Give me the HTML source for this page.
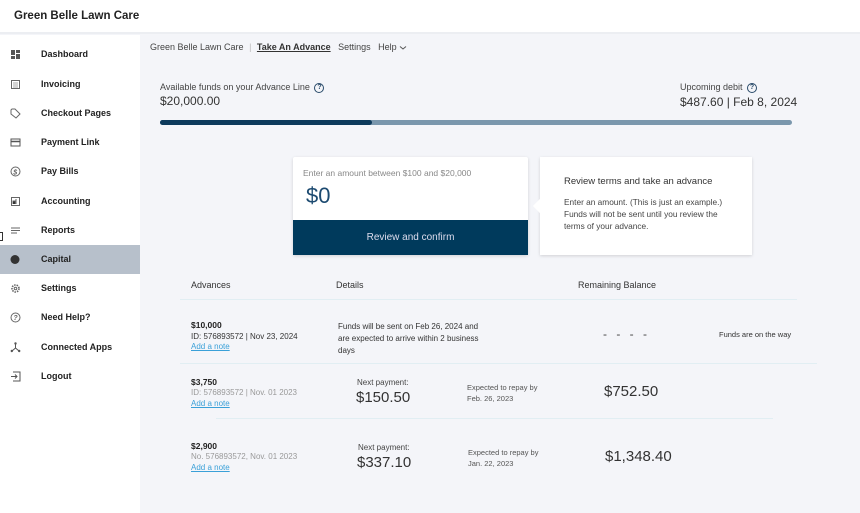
<!DOCTYPE html>
<html><head><style>
*{margin:0;padding:0;box-sizing:border-box}
body{width:860px;height:513px;overflow:hidden;background:#f4f5f9;font-family:"Liberation Sans",sans-serif;color:#222;position:relative}
.a{position:absolute;white-space:nowrap}
#hdr{left:0;top:0;width:860px;height:34px;background:#fff;border-bottom:2px solid #eceef2}
#side{left:0;top:35px;width:140px;height:478px;background:#fff}
.nav{position:absolute;left:0;width:140px;height:29px;font-size:9px;font-weight:bold;color:#222}
.nav span{position:absolute;left:41px;top:9px}
.nav i{position:absolute;left:10px;top:9px;width:11px;height:11px}
.sm{font-size:8px;color:#333}
.lnk{color:#3aa0d8;text-decoration:underline;font-size:8px}
.q{display:inline-block;width:10px;height:10px;border:1px solid #2a4b6a;border-radius:50%;font-size:7px;text-align:center;line-height:8px;color:#2a4b6a;font-weight:bold;vertical-align:middle;margin-left:2px}
</style></head><body>
<div class="a" id="hdr"></div>
<div class="a" style="left:14px;top:10px;font-size:11.5px;font-weight:bold">Green Belle Lawn Care</div>
<div class="a" id="side"></div>
<div class="nav a" style="top:40px"><i><svg width="11" height="11"><rect x="1" y="1" width="4" height="5" fill="#555"/><rect x="6" y="1" width="4" height="3" fill="#555"/><rect x="1" y="7" width="4" height="3" fill="#555"/><rect x="6" y="5" width="4" height="5" fill="#555"/></svg></i><span>Dashboard</span></div>
<div class="nav a" style="top:70px"><i><svg width="11" height="11"><rect x="1.5" y="1.5" width="8" height="8" fill="none" stroke="#666"/><path d="M3 4h5M3 6h5M3 8h5" stroke="#888" stroke-width=".7"/></svg></i><span>Invoicing</span></div>
<div class="nav a" style="top:99px"><i><svg width="11" height="11"><path d="M1 2v4l5 4 4-4-5-5H2z" fill="none" stroke="#666"/></svg></i><span>Checkout Pages</span></div>
<div class="nav a" style="top:128px"><i><svg width="11" height="11"><rect x="1" y="2" width="9" height="7" fill="none" stroke="#555"/><path d="M1 4.5h9" stroke="#555" stroke-width="1.5"/></svg></i><span>Payment Link</span></div>
<div class="nav a" style="top:157px"><i><svg width="11" height="11"><circle cx="5.5" cy="5.5" r="4.5" fill="none" stroke="#666"/><text x="3.3" y="8.3" font-size="7" fill="#666">$</text></svg></i><span>Pay Bills</span></div>
<div class="nav a" style="top:187px"><i><svg width="11" height="11"><rect x="1.5" y="1.5" width="8" height="8" fill="none" stroke="#666"/><path d="M3 8V5h2v3M6 8V3" stroke="#666"/></svg></i><span>Accounting</span></div>
<div class="nav a" style="top:216px"><i><svg width="11" height="11"><path d="M1 3h9M1 5.5h9M1 8h6" stroke="#666"/></svg></i><span>Reports</span></div>
<div class="nav a" style="top:245px;background:#b7c0cb"><i><svg width="11" height="11"><circle cx="5" cy="5.5" r="4.5" fill="#333"/></svg></i><span>Capital</span></div>
<div class="nav a" style="top:274px"><i><svg width="11" height="11"><circle cx="5.5" cy="5.5" r="3.5" fill="none" stroke="#666" stroke-width="1.6" stroke-dasharray="1.5 1"/><circle cx="5.5" cy="5.5" r="1.3" fill="none" stroke="#666"/></svg></i><span>Settings</span></div>
<div class="nav a" style="top:303px"><i><svg width="11" height="11"><circle cx="5.5" cy="5.5" r="4.5" fill="none" stroke="#666"/><text x="3.4" y="8.2" font-size="7" fill="#666">?</text></svg></i><span>Need Help?</span></div>
<div class="nav a" style="top:333px"><i><svg width="11" height="11"><path d="M5.5 1v5L2 9M5.5 6 9 9" stroke="#555" fill="none"/><circle cx="5.5" cy="1.5" r="1.2" fill="#555"/><circle cx="1.8" cy="9" r="1.2" fill="#555"/><circle cx="9.2" cy="9" r="1.2" fill="#555"/></svg></i><span>Connected Apps</span></div>
<div class="nav a" style="top:362px"><i><svg width="11" height="11"><path d="M3 1h7v9H3M1 5.5h6M5 3.5l2 2-2 2" stroke="#555" fill="none"/></svg></i><span>Logout</span></div>
<div class="a" style="left:-3px;top:232px;width:6px;height:9px;border:1px solid #333"></div>

<div class="a" style="left:150px;top:42px;font-size:9px;color:#444">Green Belle Lawn Care <span style="color:#bbb;margin:0 3px">|</span> <span style="text-decoration:underline;color:#333;font-weight:bold">Take An Advance</span> &nbsp; Settings &nbsp; Help <svg width="8" height="6" style="vertical-align:middle"><path d="M1 1.5l3 2.5 3-2.5" stroke="#555" fill="none"/></svg></div>

<div class="a" style="left:160px;top:82px;font-size:9px;color:#444">Available funds on your Advance Line <span class="q">?</span></div>
<div class="a" style="left:160px;top:94px;font-size:12px;color:#333">$20,000.00</div>
<div class="a" style="left:680px;top:82px;font-size:9px;color:#444">Upcoming debit <span class="q">?</span></div>
<div class="a" style="left:680px;top:95px;font-size:12px;color:#333">$487.60 | Feb 8, 2024</div>
<div class="a" style="left:160px;top:120px;width:632px;height:5px;border-radius:3px;background:#7a97ad"></div>
<div class="a" style="left:160px;top:120px;width:212px;height:5px;border-radius:3px;background:#0d3a5c"></div>

<div class="a" style="left:293px;top:157px;width:235px;height:98px;background:#fff;box-shadow:0 1px 3px rgba(0,0,0,.15);border-radius:2px"></div>
<div class="a" style="left:303px;top:168px;font-size:8.5px;color:#888">Enter an amount between $100 and $20,000</div>
<div class="a" style="left:306px;top:183px;font-size:22px;color:#1c4a70">$0</div>
<div class="a" style="left:293px;top:220px;width:235px;height:35px;background:#003a5c;color:#dde;font-size:10px;text-align:center;line-height:35px">Review and confirm</div>
<div class="a" style="left:540px;top:157px;width:212px;height:98px;background:#fff;box-shadow:0 1px 3px rgba(0,0,0,.15)"></div>
<div class="a" style="left:535px;top:201px;width:10px;height:10px;background:#fff;transform:rotate(45deg)"></div>
<div class="a" style="left:564px;top:176px;font-size:9.5px;color:#333">Review terms and take an advance</div>
<div class="a" style="left:564px;top:196px;font-size:8.3px;color:#444;line-height:12px">Enter an amount. (This is just an example.)<br>Funds will not be sent until you review the<br>terms of your advance.</div>

<div class="a" style="left:191px;top:280px;font-size:9px;color:#333">Advances</div>
<div class="a" style="left:336px;top:280px;font-size:9px;color:#333">Details</div>
<div class="a" style="left:578px;top:280px;font-size:9px;color:#333">Remaining Balance</div>
<div class="a" style="left:180px;top:299px;width:617px;height:1px;background:#e1eef3"></div>

<div class="a" style="left:191px;top:320px;font-size:8.5px;font-weight:bold">$10,000</div>
<div class="a sm" style="left:191px;top:332px">ID: 576893572 | Nov 23, 2024</div>
<div class="a lnk" style="left:191px;top:342px">Add a note</div>
<div class="a sm" style="left:338px;top:321px;line-height:12px">Funds will be sent on Feb 26, 2024 and<br>are expected to arrive within 2 business<br>days</div>
<div class="a" style="left:603px;top:327px;font-size:12px;color:#444;letter-spacing:3px">- - - -</div>
<div class="a" style="left:719px;top:330px;font-size:7.5px;color:#333">Funds are on the way</div>
<div class="a" style="left:180px;top:363px;width:637px;height:1px;background:#e1eef3"></div>

<div class="a" style="left:191px;top:377px;font-size:8.5px;font-weight:bold">$3,750</div>
<div class="a" style="left:191px;top:388px;font-size:8px;color:#999">ID: 576893572 | Nov. 01 2023</div>
<div class="a lnk" style="left:191px;top:399px">Add a note</div>
<div class="a" style="left:357px;top:378px;font-size:8px;color:#444">Next payment:</div>
<div class="a" style="left:356px;top:389px;font-size:15px;color:#333">$150.50</div>
<div class="a" style="left:467px;top:382px;font-size:7.5px;color:#555;line-height:11px">Expected to repay by<br>Feb. 26, 2023</div>
<div class="a" style="left:604px;top:383px;font-size:15px;color:#333">$752.50</div>
<div class="a" style="left:216px;top:418px;width:557px;height:1px;background:#e1eef3"></div>

<div class="a" style="left:191px;top:441px;font-size:8.5px;font-weight:bold">$2,900</div>
<div class="a" style="left:191px;top:452px;font-size:8px;color:#999">No. 576893572, Nov. 01 2023</div>
<div class="a lnk" style="left:191px;top:463px">Add a note</div>
<div class="a" style="left:358px;top:443px;font-size:8px;color:#444">Next payment:</div>
<div class="a" style="left:357px;top:454px;font-size:15px;color:#333">$337.10</div>
<div class="a" style="left:468px;top:447px;font-size:7.5px;color:#555;line-height:11px">Expected to repay by<br>Jan. 22, 2023</div>
<div class="a" style="left:605px;top:448px;font-size:15px;color:#333">$1,348.40</div>
</body></html>
